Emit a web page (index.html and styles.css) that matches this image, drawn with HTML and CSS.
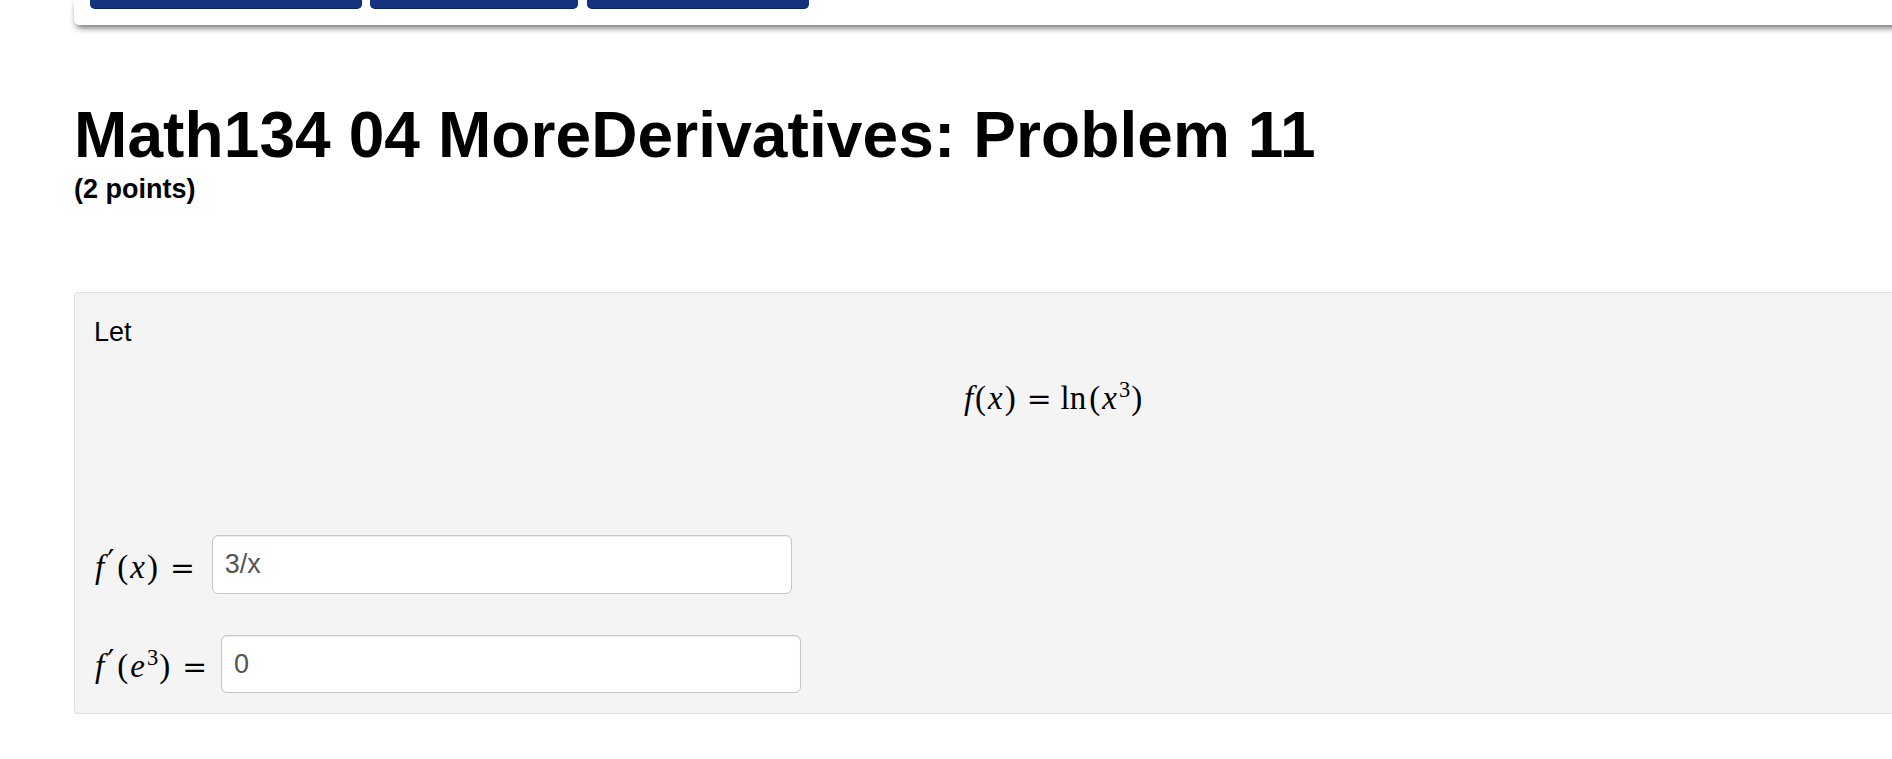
FILE: index.html
```html
<!DOCTYPE html>
<html lang="en">
<head>
<meta charset="utf-8">
<title>Math134 04 MoreDerivatives: Problem 11</title>
<link rel="stylesheet" href="styles.css">
</head>
<body>
<div class="topbar">
  <div class="btns">
    <span class="btn b1"></span>
    <span class="btn b2"></span>
    <span class="btn b3"></span>
  </div>
</div>
<div class="header">
  <h1 class="title">Math134 04 MoreDerivatives: Problem 11</h1>
  <div class="points">(2 points)</div>
</div>
<div class="problem">
  <div class="let">Let</div>
  <div class="display"><span class="math"><i>f</i><span class="p">(</span><i>x</i><span class="p">)</span><span class="eq">=</span><span class="fn">ln</span><span class="p">(</span><i>x</i><sup>3</sup><span class="p">)</span></span></div>
  <div class="row r1">
    <span class="math label"><i>f</i><span class="prime">′</span><span class="p">(</span><i>x</i><span class="p">)</span><span class="eq">=</span></span>
    <input class="answer" type="text" value="3/x">
  </div>
  <div class="row r2">
    <span class="math label"><i>f</i><span class="prime">′</span><span class="p">(</span><i>e</i><sup>3</sup><span class="p">)</span><span class="eq">=</span></span>
    <input class="answer" type="text" value="0">
  </div>
</div>
</body>
</html>
```
FILE: styles.css
```css
html, body {
  margin: 0;
  padding: 0;
  background: #ffffff;
  overflow: hidden;
}
body {
  font-family: "Liberation Sans", Arial, sans-serif;
  color: #000;
  width: 1892px;
  height: 759px;
}
.topbar {
  margin-left: 74px;
  width: 1900px;
  height: 25px;
  background: #fff;
  border-bottom-left-radius: 5px;
  box-shadow: 2px 3px 6px rgba(0, 0, 0, 0.55);
}
.btns {
  display: flex;
  padding-left: 16px;
}
.btn {
  display: block;
  height: 8px;
  background: #13337f;
  border-bottom: 1px solid #0a225e;
  border-radius: 0 0 5px 5px;
}
.b1 { width: 272px; }
.b2 { width: 208px; margin-left: 8px; }
.b3 { width: 222px; margin-left: 9px; }

.header {
  margin-left: 74px;
  padding-top: 75px;
}
.title {
  margin: 0;
  font-size: 64px;
  line-height: 70px;
  font-weight: bold;
  letter-spacing: 0.1px;
}
.points {
  margin-top: 4px;
  font-size: 27px;
  line-height: 31px;
  font-weight: bold;
}
.problem {
  margin-top: 87px;
  margin-left: 74px;
  width: 1918px;
  padding: 20px 19px 20px 19px;
  background: #f4f4f4;
  border: 1px solid #dedede;
  border-radius: 4px;
  font-size: 27px;
}
.let {
  line-height: 38px;
}
.display {
  margin-top: 27px;
  text-align: center;
  height: 40px;
  line-height: 40px;
}
.math {
  font-family: "Liberation Serif", "DejaVu Serif", serif;
  font-size: 33px;
  white-space: nowrap;
}
.math i {
  font-style: italic;
  margin: 0 1px;
}
.math sup {
  font-size: 0.68em;
  line-height: 0;
  vertical-align: 0.55em;
  margin-left: 1px;
}
.p {
  margin: 0 1px;
}
.eq {
  font-family: "DejaVu Serif", serif;
  font-size: 0.9em;
  margin: 0 9px 0 10px;
}
.fn {
  margin-right: 2px;
}
.prime {
  font-family: "DejaVu Serif", serif;
  font-size: 0.95em;
  vertical-align: 0.18em;
  margin: 0 2px 0 2px;
}
.row {
  display: flex;
  align-items: center;
}
.r1 {
  margin-top: 117px;
}
.r2 {
  margin-top: 41px;
}
.label .eq {
  margin: 0 0 0 11px;
}
.answer {
  box-sizing: border-box;
  width: 580px;
  height: 59px;
  margin-left: 17px;
  padding: 0 12px;
  font-family: "Liberation Sans", Arial, sans-serif;
  font-size: 27px;
  color: #555;
  background: #fff;
  border: 1px solid #c6c6c6;
  border-radius: 6px;
  box-shadow: inset 0 1px 1px rgba(0, 0, 0, 0.08);
  outline: none;
}
.r2 .answer {
  height: 58px;
  margin-left: 14px;
}
```
